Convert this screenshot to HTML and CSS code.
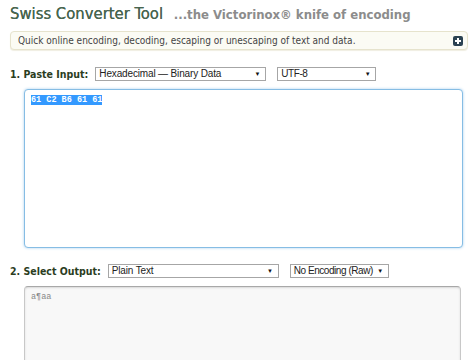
FILE: index.html
```html
<!DOCTYPE html>
<html lang="en">
<head>
    <meta charset="UTF-8">
    <meta name="viewport" content="width=device-width, initial-scale=1.0">
    <title>Swiss Converter Tool</title>
    <link rel="stylesheet" href="styles.css">
</head>
<body>

    <h1>Swiss Converter Tool <span class="tagline">...the Victorinox&reg; knife of encoding</span></h1>

    <!-- Intro bar -->
    <div class="intro">
        <span>Quick online encoding, decoding, escaping or unescaping of text and data.</span>
        <span class="expand">
            <svg width="10" height="10" viewBox="0 0 10 10">
                <rect x="0" y="0" width="10" height="10" rx="2" fill="#2b4252"/>
                <rect x="4" y="2" width="2" height="6" fill="#fff"/>
                <rect x="2" y="4" width="6" height="2" fill="#fff"/>
            </svg>
        </span>
    </div>

    <!-- Input -->
    <div class="step">
        <label class="step-label">1. Paste Input:</label>
        <span class="pick pick-wide">Hexadecimal &mdash; Binary Data</span>
        <span class="pick pick-small">UTF-8</span>
    </div>
    <div class="box box-input">
        <span class="selected">61 C2 B6 61 61</span>
    </div>

    <!-- Output -->
    <div class="step step-out">
        <label class="step-label">2. Select Output:</label>
        <span class="pick pick-wide">Plain Text</span>
        <span class="pick pick-small">No Encoding (Raw)</span>
    </div>
    <div class="box box-output">a&para;aa</div>

</body>
</html>
```

FILE: styles.css
```css
body {
    margin: 0;
    padding: 0 10px;
    font-family: "DejaVu Sans Condensed", "DejaVu Sans", Verdana, sans-serif;
    background: #fff;
}
h1 {
    margin: 3px 0 0 0;
    font-size: 16.5px;
    font-weight: normal;
    color: #48654f;
    white-space: nowrap;
    line-height: 22px;
    text-shadow: 0 0 0.4px #48654f;
}
h1 .tagline {
    margin-left: 6px;
    font-size: 13px;
    font-weight: bold;
    color: #8c8c8c;
    text-shadow: none;
}
.intro {
    display: flex;
    align-items: center;
    justify-content: space-between;
    margin-top: 5px;
    width: 458px;
    height: 19px;
    box-sizing: border-box;
    padding: 0 4px 0 7px;
    background: #fbfbf4;
    border: 1px solid #e6e3cd;
    border-radius: 4px;
    box-shadow: 0 1px 1px #f0eee2;
    font-size: 10px;
    color: #444;
}
.expand {
    display: flex;
}
.step {
    display: flex;
    align-items: center;
    margin-top: 17px;
    height: 14px;
}
.step-out {
    margin-top: 16px;
}
.step-label {
    font-size: 10.5px;
    font-weight: bold;
    color: #2b3d1e;
    margin-right: 7px;
}
.pick {
    position: relative;
    box-sizing: border-box;
    height: 14px;
    padding: 0 14px 0 3px;
    border: 1px solid #a6a6a6;
    font-family: "Liberation Sans", Arial, sans-serif;
    font-size: 10px;
    letter-spacing: -0.15px;
    line-height: 12px;
    color: #222;
    background: #fff;
    margin-right: 11px;
    white-space: nowrap;
}
.pick::after {
    content: "\25BC";
    position: absolute;
    right: 5px;
    top: 0;
    font-size: 6px;
    color: #111;
}
.pick-wide {
    width: 171px;
}
.pick-small {
    width: 99px;
    letter-spacing: -0.45px;
}
.box {
    margin: 8px 0 0 14px;
    box-sizing: border-box;
    border-radius: 4px;
    padding: 5px 6px;
    font-family: "Liberation Mono", "Courier New", monospace;
    font-size: 8.5px;
}
.box-input {
    width: 439px;
    height: 159px;
    background: #fff;
    border: 1px solid #86bde4;
    box-shadow: 0 0 3px #a9d0ef;
}
.box-output {
    width: 437px;
    height: 80px;
    background: #f8f8f8;
    border: 1px solid #c8c8c8;
    border-top-color: #a8a8a8;
    box-shadow: inset 0 1px 2px #d8d8d8;
    color: #888;
}
.selected {
    background: #3399ff;
    color: #fff;
    font-weight: bold;
}
```
